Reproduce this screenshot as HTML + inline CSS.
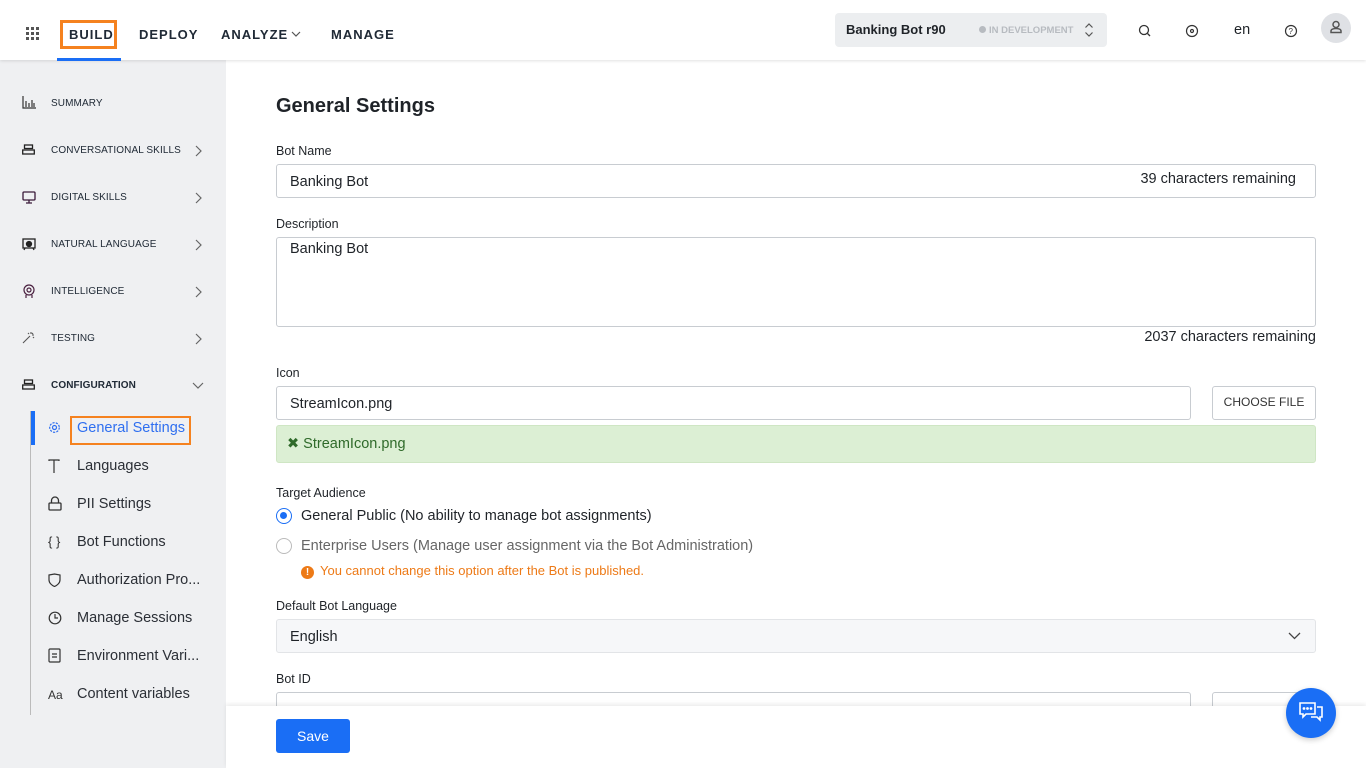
<!DOCTYPE html>
<html><head><meta charset="utf-8"><style>
*{box-sizing:border-box;margin:0;padding:0}
body{width:1366px;height:768px;overflow:hidden;font-family:"Liberation Sans",sans-serif;background:#fff;color:#1f2328;position:relative}
.top{position:absolute;left:0;top:0;width:1366px;height:60px;background:#fff;box-shadow:0 1px 3px rgba(0,0,0,.12);z-index:5}
.nav{position:absolute;top:27px;font-size:13px;font-weight:bold;letter-spacing:1px;color:#202a36}
.side{position:absolute;left:0;top:60px;width:226px;height:708px;background:#eff0f2}
.si{position:absolute;left:51px;font-size:10px;color:#202a36;letter-spacing:.1px}
.ic{position:absolute;left:22px}
.chev{position:absolute;left:194px}
.sub{position:absolute;left:77px;font-size:14.5px;color:#2b2f36}
.subi{position:absolute;left:48px}
.lab{position:absolute;left:276px;font-size:12.5px;color:#1f2328}
.inp{position:absolute;left:276px;border:1px solid #c8ccd1;border-radius:3px;background:#fff;font-size:14.5px;padding-left:13px}
</style></head><body>
<div class="top">
 <svg style="position:absolute;left:26px;top:27px" width="13" height="13"><g fill="#555"><rect x="0" y="0" width="3" height="3"/><rect x="5" y="0" width="3" height="3"/><rect x="10" y="0" width="3" height="3"/><rect x="0" y="5" width="3" height="3"/><rect x="5" y="5" width="3" height="3"/><rect x="10" y="5" width="3" height="3"/><rect x="0" y="10" width="3" height="3"/><rect x="5" y="10" width="3" height="3"/><rect x="10" y="10" width="3" height="3"/></g></svg>
 <div style="position:absolute;left:60px;top:20px;width:57px;height:29px;border:3px solid #f5821f"></div>
 <div class="nav" style="left:69px">BUILD</div>
 <div style="position:absolute;left:57px;top:58px;width:64px;height:3px;background:#1a6ef5"></div>
 <div class="nav" style="left:139px">DEPLOY</div>
 <div class="nav" style="left:221px">ANALYZE</div>
 <svg style="position:absolute;left:291px;top:31px" width="10" height="6" fill="none" stroke="#555" stroke-width="1.2"><path d="M1 1l4 4 4-4"/></svg>
 <div class="nav" style="left:331px">MANAGE</div>
 <div style="position:absolute;left:835px;top:13px;width:272px;height:34px;background:#eceef0;border-radius:4px">
  <div style="position:absolute;left:11px;top:9px;font-size:13px;font-weight:bold">Banking Bot r90</div>
  <div style="position:absolute;left:144px;top:12px;font-size:9.5px;font-weight:bold;color:#b7bbc0"><span style="display:inline-block;width:7px;height:7px;border-radius:50%;background:#b7bbc0;margin-right:3px"></span>IN DEVELOPMENT</div>
  <svg style="position:absolute;left:249px;top:9px" width="10" height="16" fill="none" stroke="#555" stroke-width="1.2"><path d="M1.5 5.5l3.5-3.5 3.5 3.5M1.5 10.5l3.5 3.5 3.5-3.5"/></svg>
 </div>
 <svg style="position:absolute;left:1138px;top:24px" width="14" height="14" fill="none" stroke="#333" stroke-width="1.3"><circle cx="6" cy="6" r="4.5"/><path d="M9.5 9.5L12 12"/></svg>
 <svg style="position:absolute;left:1185px;top:24px" width="14" height="14" fill="none" stroke="#333" stroke-width="1.2"><circle cx="7" cy="7" r="5.5"/><circle cx="7" cy="7" r="1.5"/></svg>
 <div style="position:absolute;left:1234px;top:22px;font-size:14.5px">en</div>
 <svg style="position:absolute;left:1284px;top:24px" width="14" height="14" fill="none" stroke="#333" stroke-width="1.2"><circle cx="7" cy="7" r="5.5"/><text x="4.5" y="10" font-size="8" fill="#333" stroke="none" font-family="Liberation Sans">?</text></svg>
 <div style="position:absolute;left:1321px;top:13px;width:30px;height:30px;border-radius:50%;background:#dfe1e5"><svg style="position:absolute;left:8px;top:7px" width="14" height="14" fill="none" stroke="#555" stroke-width="1.5"><circle cx="7" cy="4.5" r="3"/><path d="M2 12.5v-1.5c0-1.5 2-2.5 5-2.5s5 1 5 2.5v1.5z"/></svg></div>
</div>
<div class="side">
 <svg class="ic" style="top:36px" width="14" height="13" fill="none" stroke="#333" stroke-width="1.2"><path d="M1 0v12h13M4 5v6M7 7v4M10 4v7M12 7v4"/></svg>
 <div class="si" style="top:38px">SUMMARY</div>
 <svg class="ic" style="top:84px" width="13" height="11" fill="none" stroke="#222" stroke-width="1.3"><rect x="2.5" y="1" width="8" height="3.5"/><rect x="0.7" y="6" width="11.6" height="4"/></svg>
 <div class="si" style="top:85px">CONVERSATIONAL SKILLS</div>
 <div class="si" style="top:132px">DIGITAL SKILLS</div><svg class="ic" style="top:131px" width="14" height="13" fill="none" stroke="#3a1a3a" stroke-width="1.3"><rect x="1" y="1" width="12" height="8" rx="1"/><path d="M4 12h6M7 9v3"/></svg>
 <div class="si" style="top:179px">NATURAL LANGUAGE</div><svg class="ic" style="top:178px" width="14" height="13" fill="none" stroke="#222" stroke-width="1.3"><rect x="1" y="1" width="12" height="9"/><circle cx="7" cy="6" r="2.5" fill="#222"/><path d="M3 10l-1 2M11 10l1 2"/></svg>
 <div class="si" style="top:226px">INTELLIGENCE</div><svg class="ic" style="top:224px" width="14" height="14" fill="none" stroke="#4a2040" stroke-width="1.2"><circle cx="7" cy="6" r="5"/><circle cx="7" cy="6" r="2"/><path d="M4 11v3M10 11v3"/></svg>
 <div class="si" style="top:273px">TESTING</div><svg class="ic" style="top:271px" width="14" height="13" fill="none" stroke="#555" stroke-width="1.1"><path d="M1 12l7-7"/><path d="M9 1v2M12 4h-2M11 2l-1 1M12 7l-1-1M6 2l1 1" /></svg>
 <div class="si" style="top:320px;font-weight:bold">CONFIGURATION</div>
 <svg class="ic" style="top:319px" width="13" height="11" fill="none" stroke="#222" stroke-width="1.3"><rect x="2.5" y="1" width="8" height="3.5"/><rect x="0.7" y="6" width="11.6" height="4"/></svg>
 <svg class="chev" style="top:85px" width="8" height="12" fill="none" stroke="#666" stroke-width="1.2"><path d="M2 1l5 5-5 5"/></svg>
 <svg class="chev" style="top:132px" width="8" height="12" fill="none" stroke="#666" stroke-width="1.2"><path d="M2 1l5 5-5 5"/></svg>
 <svg class="chev" style="top:179px" width="8" height="12" fill="none" stroke="#666" stroke-width="1.2"><path d="M2 1l5 5-5 5"/></svg>
 <svg class="chev" style="top:226px" width="8" height="12" fill="none" stroke="#666" stroke-width="1.2"><path d="M2 1l5 5-5 5"/></svg>
 <svg class="chev" style="top:273px" width="8" height="12" fill="none" stroke="#666" stroke-width="1.2"><path d="M2 1l5 5-5 5"/></svg>
 <svg style="position:absolute;left:192px;top:322px" width="12" height="8" fill="none" stroke="#666" stroke-width="1.2"><path d="M1 1l5 5 5-5"/></svg>
 <div style="position:absolute;left:30px;top:351px;width:1px;height:304px;background:#bbb"></div>
 <div style="position:absolute;left:31px;top:351px;width:4px;height:34px;background:#1a6ef5"></div>
 <div style="position:absolute;left:70px;top:356px;width:121px;height:29px;border:2.5px solid #f5821f"></div>
 <div class="sub" style="top:360px;color:#2f6ff0">General Settings</div>
 <svg class="subi" style="top:361px" width="13" height="13" fill="none" stroke="#2f6ff0" stroke-width="1.2"><circle cx="6.5" cy="6.5" r="2"/><circle cx="6.5" cy="6.5" r="4.8" stroke-dasharray="2.2 1.2"/></svg>
 <div class="sub" style="top:398px">Languages</div><svg class="subi" style="top:399px" width="12" height="14" fill="none" stroke="#333" stroke-width="1.2"><path d="M1 2V1h10v1M6 1v13"/></svg>
 <div class="sub" style="top:436px">PII Settings</div><svg class="subi" style="top:436px" width="14" height="15" fill="none" stroke="#333" stroke-width="1.3"><path d="M3.5 7V4.5a3.5 3.5 0 017 0V7"/><rect x="1" y="7" width="12" height="7" rx="1"/></svg>
 <div class="sub" style="top:474px">Bot Functions</div><span class="subi" style="top:474px;font-size:13px;color:#333">{ }</span>
 <div class="sub" style="top:512px">Authorization Pro...</div><svg class="subi" style="top:513px" width="13" height="14" fill="none" stroke="#333" stroke-width="1.2"><path d="M1 2l5.5-1 5.5 1v5c0 3-3 5.5-5.5 6.5C4 12.5 1 10 1 7z"/></svg>
 <div class="sub" style="top:550px">Manage Sessions</div><svg class="subi" style="top:551px" width="14" height="14" fill="none" stroke="#333" stroke-width="1.2"><circle cx="7" cy="7" r="5.8"/><path d="M7 3v4h3"/></svg>
 <div class="sub" style="top:588px">Environment Vari...</div><svg class="subi" style="top:588px" width="13" height="15" fill="none" stroke="#333" stroke-width="1.2"><rect x="1" y="1" width="11" height="13" rx="1"/><path d="M4 6h5M4 9h5"/></svg>
 <div class="sub" style="top:626px">Content variables</div><span class="subi" style="top:628px;font-size:12px;color:#333">Aa</span>
</div>
<div style="position:absolute;left:276px;top:95px;font-size:20px;font-weight:bold">General Settings</div>
<div class="lab" style="top:144px">Bot Name</div>
<div class="inp" style="top:164px;width:1040px;height:34px;line-height:34px">Banking Bot<span style="position:absolute;right:19px;top:-3px">39 characters remaining</span></div>
<div class="lab" style="top:217px">Description</div>
<div class="inp" style="top:237px;width:1040px;height:90px;padding-top:3px">Banking Bot</div>
<div style="position:absolute;right:50px;top:329px;font-size:14.5px">2037 characters remaining</div>
<div class="lab" style="top:366px">Icon</div>
<div class="inp" style="top:386px;width:915px;height:34px;line-height:34px">StreamIcon.png</div>
<div style="position:absolute;left:1212px;top:386px;width:104px;height:34px;border:1px solid #c8ccd1;border-radius:3px;font-size:12px;text-align:center;line-height:31px;color:#333">CHOOSE FILE</div>
<div style="position:absolute;left:276px;top:425px;width:1040px;height:38px;background:#dcefd4;border:1px solid #cfe6c4;border-radius:3px;color:#2f6a2a;font-size:14.5px;line-height:36px;padding-left:10px">&#10006; StreamIcon.png</div>
<div class="lab" style="top:486px">Target Audience</div>
<div style="position:absolute;left:276px;top:508px;width:16px;height:16px;border-radius:50%;border:1.5px solid #1a6ef5"><div style="margin:3px;width:7px;height:7px;border-radius:50%;background:#1a6ef5"></div></div>
<div style="position:absolute;left:301px;top:508px;font-size:14.5px">General Public (No ability to manage bot assignments)</div>
<div style="position:absolute;left:276px;top:538px;width:16px;height:16px;border-radius:50%;border:1px solid #bbb"></div>
<div style="position:absolute;left:301px;top:538px;font-size:14.5px;color:#666">Enterprise Users (Manage user assignment via the Bot Administration)</div>
<div style="position:absolute;left:301px;top:563px;font-size:13px;color:#ed7a17"><span style="display:inline-block;width:13px;height:13px;border-radius:50%;background:#ed7a17;color:#fff;font-size:10px;text-align:center;line-height:13px;font-weight:bold;margin-right:6px">!</span>You cannot change this option after the Bot is published.</div>
<div class="lab" style="top:599px">Default Bot Language</div>
<div class="inp" style="top:619px;width:1040px;height:34px;line-height:34px;background:#f6f7f9;border-color:#e2e4e7">English<svg style="position:absolute;right:14px;top:12px" width="13" height="8" fill="none" stroke="#444" stroke-width="1.3"><path d="M1 1l5.5 5.5L12 1"/></svg></div>
<div class="lab" style="top:672px">Bot ID</div>
<div class="inp" style="top:692px;width:915px;height:34px"></div>
<div style="position:absolute;left:1212px;top:692px;width:104px;height:34px;border:1px solid #c8ccd1;border-radius:3px"></div>
<div style="position:absolute;left:226px;top:706px;width:1140px;height:62px;background:#fff;box-shadow:0 -2px 4px rgba(0,0,0,.08)">
 <div style="position:absolute;left:50px;top:13px;width:74px;height:34px;background:#1a6ef5;border-radius:3px;color:#fff;font-size:14px;text-align:center;line-height:34px">Save</div>
</div>
<div style="position:absolute;left:1286px;top:688px;width:50px;height:50px;border-radius:50%;background:#1a6ef5;box-shadow:0 2px 6px rgba(0,0,0,.2)">
 <svg style="position:absolute;left:13px;top:14px" width="25" height="22" fill="none" stroke="#fff" stroke-width="1.6"><path d="M1 1h15v11H7l-3 3v-3H1z"/><path d="M18 5h5v10h-2v3l-3-3h-6"/><circle cx="5" cy="6.5" r=".6" fill="#fff"/><circle cx="8.5" cy="6.5" r=".6" fill="#fff"/><circle cx="12" cy="6.5" r=".6" fill="#fff"/></svg>
</div>
</body></html>
